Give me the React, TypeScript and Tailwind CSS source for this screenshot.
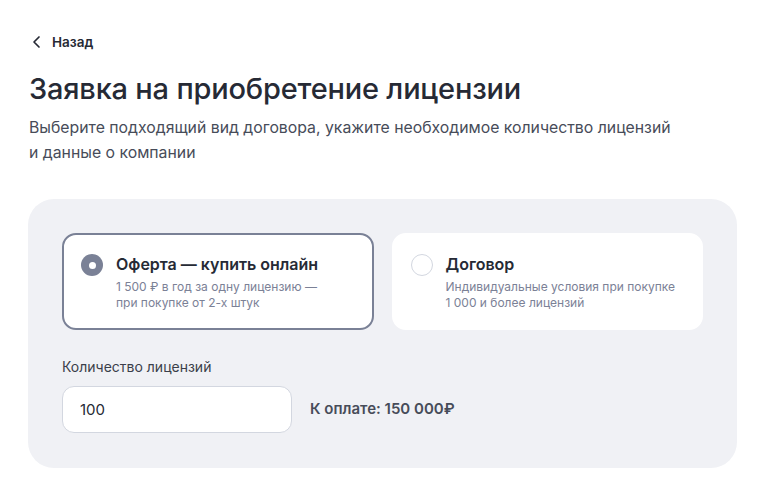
import React, { useState } from 'react';

type Kind = 'offer' | 'contract';

interface OptionCardProps {
  title: string;
  lines: string[];
  selected: boolean;
  onSelect: () => void;
}

const OptionCard: React.FC<OptionCardProps> = ({ title, lines, selected, onSelect }) => {
  return (
    <button
      type="button"
      onClick={onSelect}
      className={
        selected
          ? 'flex h-[97px] items-start gap-[13px] rounded-[14px] border-2 border-[#7a8196] bg-white pl-[17px] pt-[18px] text-left'
          : 'flex h-[97px] items-start gap-[13px] rounded-[14px] border-2 border-white bg-white pl-[17px] pt-[18px] text-left'
      }
    >
      {selected ? (
        <span className="mt-[1px] flex h-[22px] w-[22px] shrink-0 items-center justify-center rounded-full bg-[#7a8196]">
          <span className="h-[7px] w-[7px] rounded-full bg-white"></span>
        </span>
      ) : (
        <span className="mt-[1px] h-[22px] w-[22px] shrink-0 rounded-full border border-[#d3d7e0] bg-white"></span>
      )}
      <span className="flex flex-col">
        <span className="text-[16px] font-semibold leading-[22px] text-[#262a35]">{title}</span>
        <span className="mt-[4px] text-[12px] leading-[16px] text-[#7b8196]">
          {lines.map((l) => (
            <span key={l} className="block">{l}</span>
          ))}
        </span>
      </span>
    </button>
  );
};

const App: React.FC = () => {
  const [kind, setKind] = useState<Kind>('offer');
  const [count, setCount] = useState('100');
  const total = (parseInt(count, 10) || 0) * 1500;
  const totalText = total.toLocaleString('ru-RU').replace(/\u00a0|\u202f/g, ' ');

  return (
    <div className="min-h-screen bg-white font-['Inter','Noto_Sans',sans-serif] text-[#262a35]">
      <div className="pl-[29px] pr-[34px] pt-[33px]">
        <a href="#" className="flex items-center gap-[8px] text-[13.5px] font-semibold leading-[18px] text-[#262a35]">
          <svg width="14" height="14" viewBox="0 0 14 14" fill="none" className="ml-[1px]">
            <path d="M9 2 L4 7 L9 12" stroke="#262a35" strokeWidth="1.7" strokeLinecap="round" strokeLinejoin="round" />
          </svg>
          Назад
        </a>

        <h1 className="mt-[19px] text-[29px] font-medium leading-[38px] tracking-[-0.2px]">
          Заявка на приобретение лицензии
        </h1>
        <p className="mt-[7px] text-[15.8px] leading-[25px] text-[#474c59]">
          Выберите подходящий вид договора, укажите необходимое количество лицензий
          <br />
          и данные о компании
        </p>

        <div className="mt-[34px] w-[709px] -ml-[1px] rounded-[26px] bg-[#f0f1f5] px-[34px] pb-[35px] pt-[34px]">
          <div className="grid grid-cols-2 gap-[18px]">
            <OptionCard
              title="Оферта — купить онлайн"
              lines={['1 500 ₽ в год за одну лицензию —', 'при покупке от 2-х штук']}
              selected={kind === 'offer'}
              onSelect={() => setKind('offer')}
            />
            <OptionCard
              title="Договор"
              lines={['Индивидуальные условия при покупке', '1 000 и более лицензий']}
              selected={kind === 'contract'}
              onSelect={() => setKind('contract')}
            />
          </div>

          <label className="mt-[28px] block text-[14px] leading-[18px] text-[#3b3f4a]">Количество лицензий</label>
          <div className="mt-[10px] flex items-center gap-[18px]">
            <input
              value={count}
              onChange={(e) => setCount(e.target.value)}
              className="h-[47px] w-[230px] rounded-[12px] border border-[#d3d7e0] bg-white px-[17px] text-[15px] text-[#262a35] outline-none"
            />
            <span className="text-[15px] font-semibold text-[#474c59]">К оплате: {totalText}₽</span>
          </div>
        </div>
      </div>
    </div>
  );
};

export default App;
